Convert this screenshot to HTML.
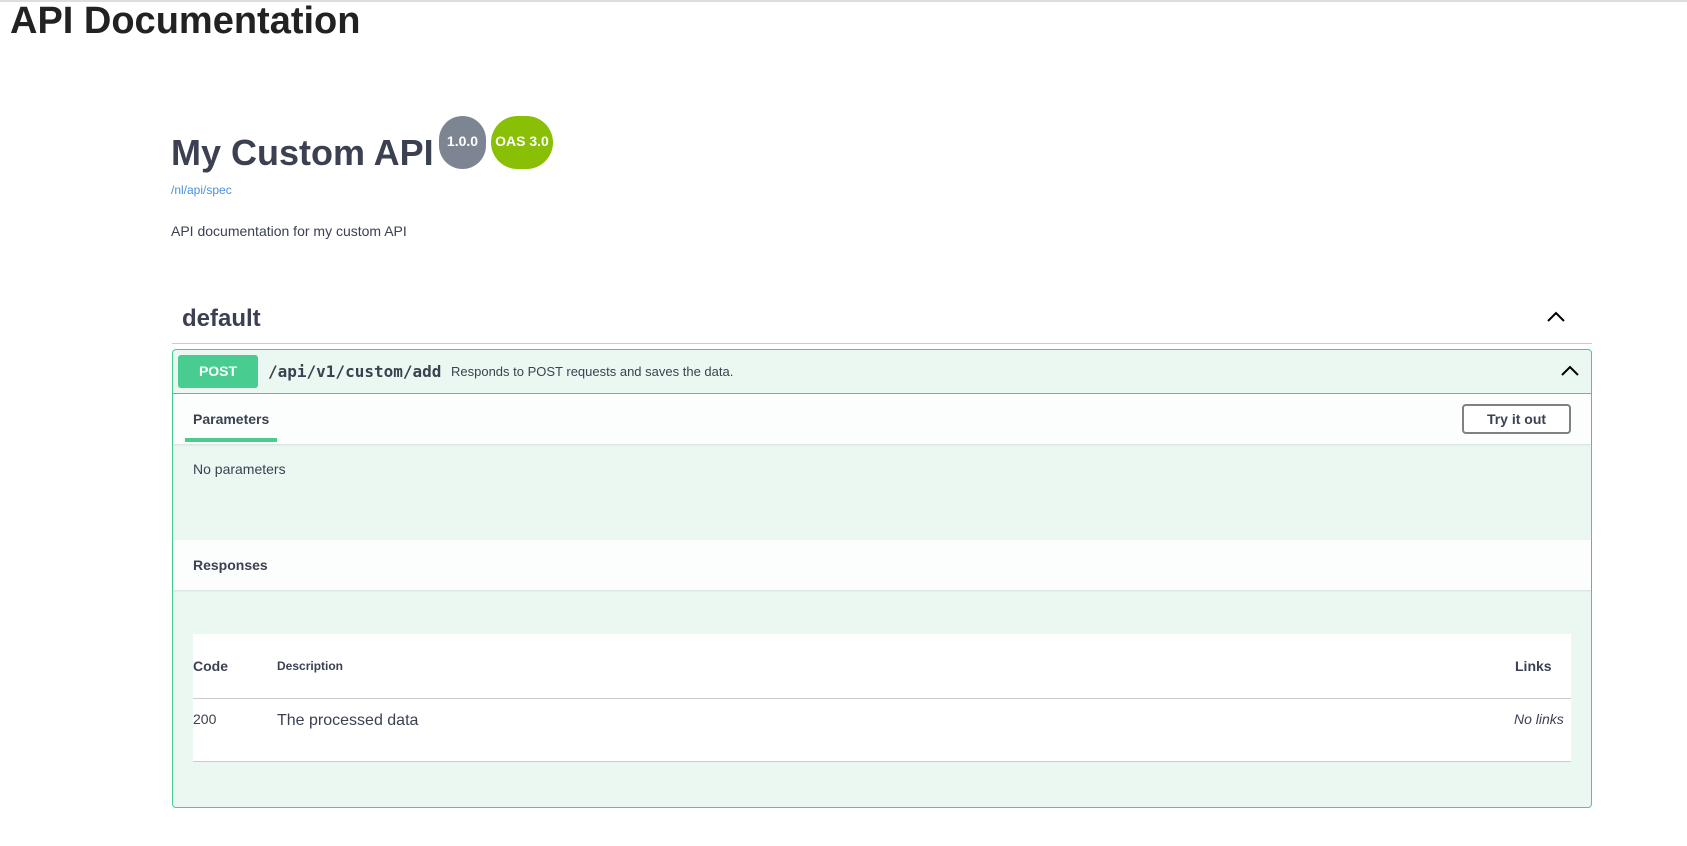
<!DOCTYPE html>
<html><head><meta charset="utf-8"><style>
*{margin:0;padding:0;box-sizing:border-box}
body{width:1687px;height:846px;background:#fff;position:relative;overflow:hidden;font-family:"Liberation Sans",sans-serif;color:#3b4151}
.a{position:absolute;white-space:nowrap}
</style></head><body>
<div class="a" style="left:0;top:0;width:1687px;height:2px;background:#ddd"></div>
<div class="a" style="left:10px;top:-1px;font-size:38px;font-weight:bold;color:#222;line-height:44px">API Documentation</div>
<div class="a" style="left:171px;top:132px;font-size:36px;font-weight:bold;line-height:42px">My Custom API</div>
<div class="a" style="left:439px;top:116px;width:47px;height:53px;border-radius:24px;background:#7d8492;color:#fff;font-size:14px;font-weight:bold;text-align:center;line-height:51px">1.0.0</div>
<div class="a" style="left:491px;top:116px;width:62px;height:53px;border-radius:27px;background:#89bf04;color:#fff;font-size:14px;font-weight:bold;text-align:center;line-height:51px">OAS 3.0</div>
<div class="a" style="left:171px;top:183px;font-size:12px;color:#4990e2">/nl/api/spec</div>
<div class="a" style="left:171px;top:223px;font-size:14px">API documentation for my custom API</div>
<div class="a" style="left:182px;top:304px;font-size:24px;font-weight:bold;line-height:30px">default</div>
<svg class="a" style="left:1546px;top:309px" width="20" height="14"><path d="M2 12 L10 4 L18 12" stroke="#000" stroke-width="2" fill="none"/></svg>
<div class="a" style="left:172px;top:343px;width:1420px;height:1px;background:#ccc"></div>
<div class="a" style="left:172px;top:349px;width:1420px;height:459px;border:1px solid #49cc90;border-radius:4px;background:#ebf8f2"></div>
<div class="a" style="left:173px;top:393px;width:1418px;height:1px;background:#49cc90"></div>
<div class="a" style="left:178px;top:355px;width:80px;height:33px;border-radius:3px;background:#49cc90;color:#fff;font-size:14px;font-weight:bold;text-align:center;line-height:33px">POST</div>
<div class="a" style="left:268px;top:360px;font-family:'DejaVu Sans Mono','Liberation Mono',monospace;font-size:16px;font-weight:bold;line-height:24px">/api/v1/custom/add</div>
<div class="a" style="left:451px;top:364px;font-size:13px;line-height:16px">Responds to POST requests and saves the data.</div>
<svg class="a" style="left:1560px;top:363px" width="20" height="14"><path d="M2 12 L10 4 L18 12" stroke="#000" stroke-width="2" fill="none"/></svg>
<div class="a" style="left:173px;top:394px;width:1418px;height:50px;background:#fcfefd;box-shadow:0 1px 2px rgba(0,0,0,.1)"></div>
<div class="a" style="left:193px;top:411px;font-size:14px;font-weight:bold">Parameters</div>
<div class="a" style="left:185px;top:438px;width:92px;height:4px;background:#49cc90"></div>
<div class="a" style="left:1462px;top:404px;width:109px;height:30px;border:2px solid #808080;border-radius:4px;background:#fff;font-size:14px;font-weight:bold;text-align:center;line-height:26px">Try it out</div>
<div class="a" style="left:193px;top:461px;font-size:14px">No parameters</div>
<div class="a" style="left:173px;top:540px;width:1418px;height:50px;background:#fcfefd;box-shadow:0 1px 2px rgba(0,0,0,.1)"></div>
<div class="a" style="left:193px;top:557px;font-size:14px;font-weight:bold">Responses</div>
<div class="a" style="left:193px;top:634px;width:1378px;height:128px;background:#fff;border-bottom:1px solid #ccc"></div>
<div class="a" style="left:193px;top:698px;width:1378px;height:1px;background:#ccc"></div>
<div class="a" style="left:193px;top:658px;font-size:14px;font-weight:bold">Code</div>
<div class="a" style="left:277px;top:659px;font-size:12px;font-weight:bold">Description</div>
<div class="a" style="left:1515px;top:658px;font-size:14px;font-weight:bold">Links</div>
<div class="a" style="left:193px;top:711px;font-size:14px">200</div>
<div class="a" style="left:277px;top:712px;font-size:16px">The processed data</div>
<div class="a" style="left:1514px;top:711px;font-size:14px;font-style:italic">No links</div>
</body></html>
